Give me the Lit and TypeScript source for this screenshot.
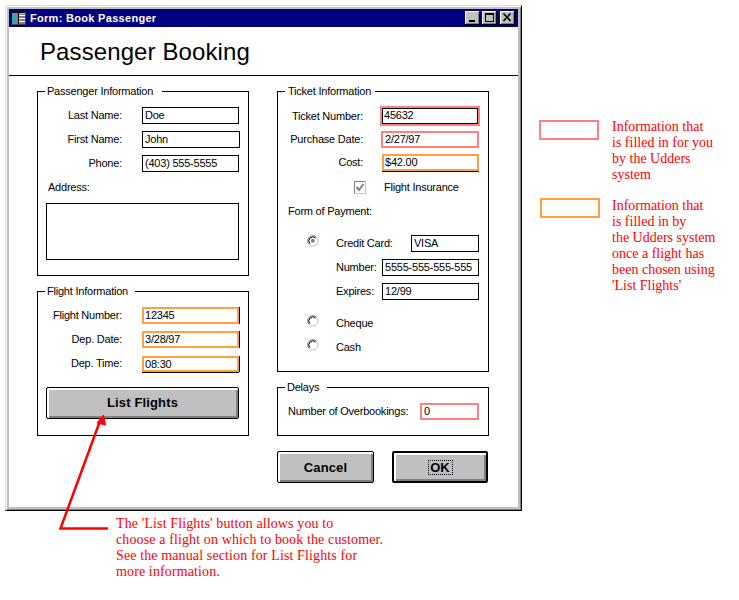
import { LitElement, html, css, svg } from "lit";
import { customElement } from "lit/decorators.js";

@customElement("app-root")
export class AppRoot extends LitElement {
  static styles = css`
    :host { display: block; position: relative; width: 739px; height: 600px; background: #fff; overflow: hidden;
      font-family: "Liberation Sans", Arial, sans-serif; font-size: 11px; color: #000; letter-spacing: -0.22px; }
    * { box-sizing: border-box; }
    .top { display: flex; align-items: flex-start; }
    .win { width: 517px; margin: 5px 0 0 5px; padding: 3px; background: #c0c0c0; border: 1px solid #000; border-top-color: #dfdfdf; border-left-color: #dfdfdf;
      box-shadow: inset 1px 1px 0 #fff, inset -1px -1px 0 #808080; flex: none; }
    .title { height: 18px; background: #000080; color: #fff; font-weight: bold; font-size: 11px; display: flex; align-items: center; padding: 0 3px 0 2px; }
    .title svg.ico { display: block; margin-right: 4px; }
    .title span { flex: 1; letter-spacing: 0.3px; }
    .ctl { display: flex; align-items: center; }
    .ctl svg { display: block; }
    .ctl svg.mx { margin: 0 2px; }
    .ctl svg.cl { margin-left: 1px; }
    .content { background: #fff; padding-bottom: 24px; }
    .head { height: 49px; border-bottom: 1px solid #000; padding: 10px 0 0 31px; font-size: 24px; line-height: 30px; letter-spacing: 0.1px; }
    .cols { display: grid; grid-template-columns: 212px 212px; column-gap: 28px; padding: 15px 0 0 28px; }
    .col { display: flex; flex-direction: column; gap: 15px; }
    .group { position: relative; border: 1px solid #000; padding: 15px 0; }
    .group.fl { padding-bottom: 16px; }
    .group.tk { padding: 14px 0 16px; }
    .legend { position: absolute; top: -8px; left: 7px; height: 16px; line-height: 14px; background: #fff; padding: 0 9px 0 2px; }
    .legend.lf2 { padding-right: 7px; }
    .legend.t { padding: 0 4px 0 3px; }
    .legend.d { padding-right: 8px; }
    .row { display: flex; align-items: center; min-height: 17px; }
    .row + .row { margin-top: 7px; }
    .lab { width: 84px; text-align: right; margin-right: 20px; flex: none; padding-bottom: 1px; }
    .f { height: 17px; width: 97px; border: 1px solid #000; padding-left: 2px; line-height: 15px; white-space: nowrap; overflow: visible; flex: none; background: #fff; }
    .f.wide { width: 98px; }
    .o { border: 2px solid #ffa040; padding-left: 1px; line-height: 13px; box-shadow: 1px 0 0 #000; }
    .o.bb { box-shadow: 1px 0 0 #000, 0 1px 0 #000; height: 16px; }
    .text-label { height: 16px; line-height: 16px; margin: 7px 0 8px 10px; }
    .area { display: block; margin-left: 8px; width: 193px; height: 57px; border: 1px solid #000; }
    .btn { display: flex; align-items: center; justify-content: center; height: 32px; background: #c0c0c0; border: 1px solid #000; border-radius: 2px;
      box-shadow: inset 2px 2px 0 #fff, inset -2px -2px 0 #808080; font-weight: bold; font-size: 13px; letter-spacing: 0.15px; }
    .lf { width: 193px; margin: 15px 0 0 8px; padding-bottom: 1px; }
    .btns { display: flex; gap: 18px; }
    .cancel { width: 97px; }
    .ok { width: 96px; border-width: 2px; }
    .ok span { border: 1px dotted #000; padding: 0 1px; line-height: 13px; width: 25px; text-align: center; letter-spacing: 0; }

    .tlab { width: 85px; text-align: right; margin-right: 17px; flex: none; padding-bottom: 1px; }
    .tk .trow { display: flex; align-items: center; }
    .p1 { height: 20px; width: 100px; border: 2px solid #ff8080; box-shadow: inset 0 0 0 1px #000; padding-left: 2px; line-height: 15px; }
    .p2 { height: 17px; width: 98px; margin-left: 1px; border: 2px solid #ff8080; padding-left: 2px; line-height: 13px; }
    .o2 { height: 17px; width: 97px; margin-left: 2px; border: 2px solid #ffa040; padding-left: 1px; line-height: 13px; box-shadow: 0 1px 0 #000; }
    .m5 { margin-top: 5px; }
    .m6 { margin-top: 6px; }
    .m7 { margin-top: 7px; }
    .m8 { margin-top: 8px; }
    .ins { height: 16px; margin-top: 8px; display: flex; align-items: center; padding-left: 76px; }
    .ins svg { display: block; margin-right: 18px; }
    .fop { height: 16px; line-height: 16px; margin: 8px 0 0 10px; }
    .pay { display: flex; align-items: center; padding-left: 29px; height: 17px; }
    .pay.first { margin-top: 16px; }
    .pay.sp { margin-top: 15px; height: 16px; }
    .pay.m8 { height: 16px; }
    .pay .rad { width: 29px; flex: none; align-self: flex-start; }
    .pay .rad svg { display: block; }
    .pay > span { padding-bottom: 1px; }
    .pl75 { width: 75px; flex: none; }
    .pl46 { width: 46px; flex: none; }
    .visa { width: 68px; }
    .dl { display: flex; align-items: center; padding-left: 10px; height: 17px; }
    .dl span { width: 132px; flex: none; padding-bottom: 1px; }
    .pk { width: 59px; height: 17px; border: 2px solid #ff8080; padding-left: 2px; line-height: 13px; }

    .side { flex: 1; padding: 119px 0 0 17px; font-family: "Liberation Serif", "Times New Roman", serif; font-size: 14px; line-height: 16px; color: #f00; letter-spacing: 0; }
    .key { display: flex; align-items: flex-start; column-gap: 13px; }
    .key + .key { margin-top: 15px; }
    .swatch { width: 60px; height: 20px; flex: none; margin-top: 1px; border: 2px solid #ff8080; }
    .swatch.or { border-color: #ffa040; margin: 0 -1px 0 1px; }
    .note { margin: 5px 0 0 116px; font-family: "Liberation Serif", "Times New Roman", serif; font-size: 14px; line-height: 16px; color: #f00; letter-spacing: 0.12px; }
    .arrow { position: absolute; left: 0; top: 0; pointer-events: none; }
  `;

  private radio(checked: boolean) {
    return html`<svg width="12" height="12" viewBox="0 0 12 12">
      <path d="M9.5 2.2A5 5 0 0 0 2.2 9.5" fill="none" stroke="#808080" stroke-width="1"/>
      <path d="M8.6 3A3.8 3.8 0 0 0 3 8.6" fill="none" stroke="#000" stroke-width="1"/>
      <path d="M2.2 9.5A5 5 0 0 0 9.5 2.2" fill="none" stroke="#c0c0c0" stroke-width="1"/>
      ${checked ? svg`<circle cx="5.8" cy="5.8" r="2" fill="#808080"/>` : ""}
    </svg>`;
  }

  render() {
    return html`
      <div class="top">
        <div class="win">
          <div class="title">
            <svg class="ico" width="15" height="13" viewBox="0 0 15 13" shape-rendering="crispEdges">
              <rect width="15" height="13" fill="#808080"/>
              <rect x="0" y="0" width="15" height="1" fill="#000"/>
              <rect x="0" y="0" width="1" height="13" fill="#000"/>
              <rect x="1" y="1" width="5" height="11" fill="#00c0c0"/>
              <rect x="2" y="2" width="4" height="3" fill="#808080"/>
              <rect x="2" y="7" width="4" height="4" fill="#808080"/>
              <rect x="7" y="1" width="7" height="1" fill="#c0c0c0"/>
              <rect x="8" y="3" width="6" height="1" fill="#fff"/>
              <rect x="8" y="6" width="6" height="1" fill="#fff"/>
              <rect x="8" y="9" width="6" height="1" fill="#fff"/>
              <rect x="7" y="1" width="1" height="11" fill="#000"/>
              <rect x="14" y="0" width="1" height="13" fill="#404040"/>
              <rect x="0" y="12" width="15" height="1" fill="#404040"/>
            </svg>
            <span>Form: Book Passenger</span>
            <div class="ctl">
              <svg width="15" height="14" viewBox="0 0 15 14" shape-rendering="crispEdges">
                <rect width="15" height="14" fill="#000"/><rect width="14" height="13" fill="#fff"/><rect x="1" y="1" width="13" height="12" fill="#808080"/><rect x="1" y="1" width="12" height="11" fill="#c0c0c0"/>
                <rect x="4" y="9" width="6" height="2" fill="#000"/>
              </svg>
              <svg class="mx" width="15" height="14" viewBox="0 0 15 14" shape-rendering="crispEdges">
                <rect width="15" height="14" fill="#000"/><rect width="14" height="13" fill="#fff"/><rect x="1" y="1" width="13" height="12" fill="#808080"/><rect x="1" y="1" width="12" height="11" fill="#c0c0c0"/>
                <rect x="3" y="2" width="9" height="9" fill="#000"/><rect x="4" y="4" width="7" height="6" fill="#c0c0c0"/>
              </svg>
              <svg class="cl" width="15" height="14" viewBox="0 0 15 14">
                <g shape-rendering="crispEdges"><rect width="15" height="14" fill="#000"/><rect width="14" height="13" fill="#fff"/><rect x="1" y="1" width="13" height="12" fill="#808080"/><rect x="1" y="1" width="12" height="11" fill="#c0c0c0"/></g>
                <path d="M3.5 2.5l7 7.5M10.5 2.5l-7 7.5" stroke="#000" stroke-width="1.7" fill="none"/>
              </svg>
            </div>
          </div>
          <div class="content">
            <div class="head">Passenger Booking</div>
            <div class="cols">
              <div class="col">
                <div class="group">
                  <div class="legend">Passenger Information</div>
                  <div class="row"><span class="lab">Last Name:</span><div class="f">Doe</div></div>
                  <div class="row"><span class="lab">First Name:</span><div class="f wide">John</div></div>
                  <div class="row"><span class="lab">Phone:</span><div class="f">(403) 555-5555</div></div>
                  <div class="text-label">Address:</div>
                  <div class="area"></div>
                </div>
                <div class="group fl">
                  <div class="legend lf2">Flight Information</div>
                  <div class="row"><span class="lab">Flight Number:</span><div class="f o">12345</div></div>
                  <div class="row"><span class="lab">Dep. Date:</span><div class="f o">3/28/97</div></div>
                  <div class="row"><span class="lab">Dep. Time:</span><div class="f o bb">08:30</div></div>
                  <div class="btn lf">List Flights</div>
                </div>
              </div>
              <div class="col">
                <div class="group tk">
                  <div class="legend t">Ticket Information</div>
                  <div class="trow"><span class="tlab">Ticket Number:</span><div class="p1">45632</div></div>
                  <div class="trow m5"><span class="tlab">Purchase Date:</span><div class="p2">2/27/97</div></div>
                  <div class="trow m6"><span class="tlab">Cost:</span><div class="o2">$42.00</div></div>
                  <div class="ins">
                    <svg width="12" height="13" viewBox="0 0 12 13">
                      <g shape-rendering="crispEdges"><rect width="12" height="13" fill="#c0c0c0"/><rect width="11" height="12" fill="#808080"/><rect x="1" y="1" width="10" height="11" fill="#fff"/></g>
                      <path d="M2.5 6l2.5 3l4.5-6" fill="none" stroke="#808080" stroke-width="2"/>
                    </svg>
                    <span>Flight Insurance</span>
                  </div>
                  <div class="fop">Form of Payment:</div>
                  <div class="pay first"><div class="rad">${this.radio(true)}</div><span class="pl75">Credit Card:</span><div class="f visa">VISA</div></div>
                  <div class="pay m7"><div class="rad"></div><span class="pl46">Number:</span><div class="f">5555-555-555-555</div></div>
                  <div class="pay m7"><div class="rad"></div><span class="pl46">Expires:</span><div class="f">12/99</div></div>
                  <div class="pay sp"><div class="rad">${this.radio(false)}</div><span>Cheque</span></div>
                  <div class="pay m8"><div class="rad">${this.radio(false)}</div><span>Cash</span></div>
                </div>
                <div class="group">
                  <div class="legend d">Delays</div>
                  <div class="dl"><span>Number of Overbookings:</span><div class="pk">0</div></div>
                </div>
                <div class="btns">
                  <div class="btn cancel">Cancel</div>
                  <div class="btn ok"><span>OK</span></div>
                </div>
              </div>
            </div>
          </div>
        </div>
        <div class="side">
          <div class="key"><div class="swatch"></div><div>Information that<br>is filled in for you<br>by the Udders<br>system</div></div>
          <div class="key"><div class="swatch or"></div><div>Information that<br>is filled in by<br>the Udders system<br>once a flight has<br>been chosen using<br>'List Flights'</div></div>
        </div>
      </div>
      <div class="note">The 'List Flights' button allows you to<br>choose a flight on which to book the customer.<br>See the manual section for List Flights for<br>more information.</div>
      <svg class="arrow" width="739" height="600" viewBox="0 0 739 600">
        <path d="M108 528.5H60.5L100 421" fill="none" stroke="#f00" stroke-width="2.5"/>
        <path d="M103.5 415L105.5 425L97 423Z" fill="#f00" stroke="#f00" stroke-width="1"/>
      </svg>
    `;
  }
}
